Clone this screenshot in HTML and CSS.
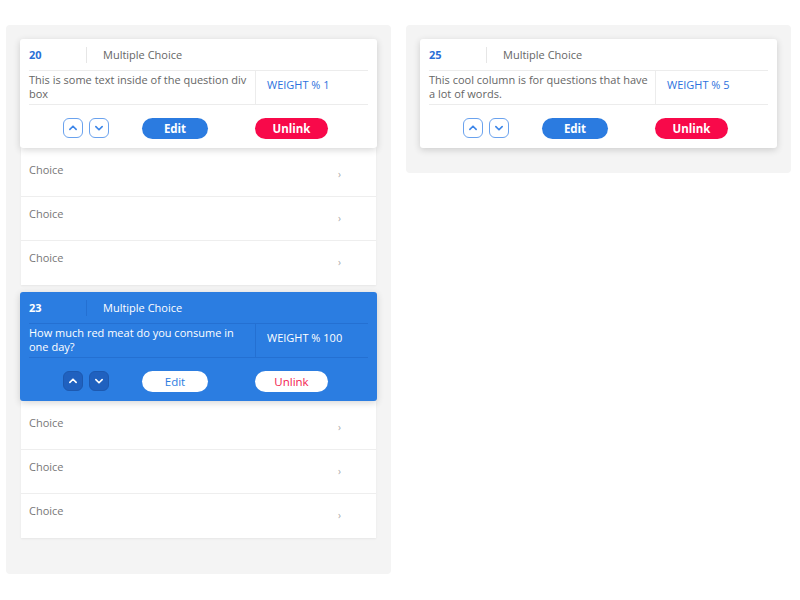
FILE: index.html
```html
<!DOCTYPE html>
<html lang="en">
<head>
    <meta charset="UTF-8">
    <title>Questions</title>
    <link rel="stylesheet" href="styles.css">
</head>
<body>
    <div class="board">
        <div class="column">
            <div class="question">
                <div class="q-head">
                    <div class="q-num">20</div>
                    <div class="q-type">Multiple Choice</div>
                </div>
                <div class="q-body">
                    <div class="q-text">This is some text inside of the question div box</div>
                    <div class="q-weight">WEIGHT % 1</div>
                </div>
                <div class="q-actions">
                    <div class="arrows">
                        <span class="arrow"><svg viewBox="0 0 20 20"><polyline points="6.5,11.5 10,8 13.5,11.5"/></svg></span>
                        <span class="arrow"><svg viewBox="0 0 20 20"><polyline points="6.5,8.5 10,12 13.5,8.5"/></svg></span>
                    </div>
                    <div><span class="btn btn-edit">Edit</span></div>
                    <div><span class="btn btn-unlink">Unlink</span></div>
                </div>
            </div>
            <div class="choices">
                <div class="choice"><span>Choice</span><span class="chev">›</span></div>
                <div class="choice"><span>Choice</span><span class="chev">›</span></div>
                <div class="choice"><span>Choice</span><span class="chev">›</span></div>
            </div>

            <div class="question active">
                <div class="q-head">
                    <div class="q-num">23</div>
                    <div class="q-type">Multiple Choice</div>
                </div>
                <div class="q-body">
                    <div class="q-text">How much red meat do you consume in one day?</div>
                    <div class="q-weight">WEIGHT % 100</div>
                </div>
                <div class="q-actions">
                    <div class="arrows">
                        <span class="arrow"><svg viewBox="0 0 20 20"><polyline points="6.5,11.5 10,8 13.5,11.5"/></svg></span>
                        <span class="arrow"><svg viewBox="0 0 20 20"><polyline points="6.5,8.5 10,12 13.5,8.5"/></svg></span>
                    </div>
                    <div><span class="btn btn-edit">Edit</span></div>
                    <div><span class="btn btn-unlink">Unlink</span></div>
                </div>
            </div>
            <div class="choices">
                <div class="choice"><span>Choice</span><span class="chev">›</span></div>
                <div class="choice"><span>Choice</span><span class="chev">›</span></div>
                <div class="choice"><span>Choice</span><span class="chev">›</span></div>
            </div>
        </div>

        <div class="column short">
            <div class="question">
                <div class="q-head">
                    <div class="q-num">25</div>
                    <div class="q-type">Multiple Choice</div>
                </div>
                <div class="q-body">
                    <div class="q-text">This cool column is for questions that have a lot of words.</div>
                    <div class="q-weight">WEIGHT % 5</div>
                </div>
                <div class="q-actions">
                    <div class="arrows">
                        <span class="arrow"><svg viewBox="0 0 20 20"><polyline points="6.5,11.5 10,8 13.5,11.5"/></svg></span>
                        <span class="arrow"><svg viewBox="0 0 20 20"><polyline points="6.5,8.5 10,12 13.5,8.5"/></svg></span>
                    </div>
                    <div><span class="btn btn-edit">Edit</span></div>
                    <div><span class="btn btn-unlink">Unlink</span></div>
                </div>
            </div>
        </div>
    </div>
</body>
</html>
```

FILE: styles.css
```css
body{
    margin: 0;
    background: #fff;
    font-family: "Open Sans", "Noto Sans", sans-serif;
    font-size: 11px;
    color: #666;
}
.board{
    display: flex;
    align-items: flex-start;
    gap: 15px;
    padding: 25px 6px;
}
.column{
    width: 385px;
    background: #f4f4f4;
    border-radius: 4px;
    padding: 14px 14px 36px;
    box-sizing: border-box;
}
.column.short{
    padding-bottom: 25px;
}
.question{
    background: #fff;
    border-radius: 3px;
    box-shadow: 0 2px 7px rgba(0,0,0,0.16);
    padding: 0 9px;
    position: relative;
    z-index: 1;
}
.q-head{
    display: flex;
    align-items: center;
    height: 31px;
    border-bottom: 1px solid #ececec;
}
.q-num{
    width: 57px;
    font-weight: 700;
    color: #2a6fd6;
    border-right: 1px solid #e6e6e6;
    line-height: 16px;
}
.q-type{
    padding-left: 16px;
    color: #666;
}
.q-body{
    display: grid;
    grid-template-columns: 2fr 1fr;
    border-bottom: 1px solid #ececec;
    height: 33px;
}
.q-text{
    line-height: 14px;
    padding-top: 2px;
    padding-right: 2px;
}
.q-weight{
    border-left: 1px solid #ececec;
    padding-left: 11px;
    line-height: 28px;
    color: #2d72de;
}
.q-actions{
    display: grid;
    grid-template-columns: 1fr 1fr 1fr;
    align-items: center;
    height: 40px;
    padding-top: 3px;
}
.arrows{
    display: flex;
    justify-content: center;
    gap: 6px;
}
.arrow{
    width: 18px;
    height: 18px;
    border: 1px solid #6aa2ee;
    border-radius: 6px;
    display: block;
}
.arrow svg{
    width: 18px;
    height: 18px;
    display: block;
    fill: none;
    stroke: #3d86e8;
    stroke-width: 1.8;
    stroke-linecap: round;
    stroke-linejoin: round;
}
.btn{
    display: inline-block;
    height: 21px;
    line-height: 21px;
    border-radius: 11px;
    text-align: center;
    color: #fff;
    font-weight: 700;
    font-size: 11.5px;
}
.btn-edit{
    width: 66px;
    background: #2b7be0;
}
.btn-unlink{
    width: 73px;
    background: #f8094a;
}
.choices{
    margin: 0 1px 7px;
    padding-top: 5px;
    background: #fff;
    box-shadow: 0 1px 2px rgba(0,0,0,0.06);
}
.choices:last-child{
    margin-bottom: 0;
}
.choice{
    height: 44px;
    box-sizing: border-box;
    padding: 10px 0 0 8px;
    border-bottom: 1px solid #eee;
    display: flex;
    line-height: 14px;
    color: #777;
}
.choice:last-child{
    border-bottom: none;
}
.choice .chev{
    margin-left: auto;
    width: 38px;
    padding-top: 4px;
    color: #aaa;
    font-size: 10px;
}

.question.active{
    background: #2b7de1;
    color: #fff;
}
.active .q-head,
.active .q-body{
    border-bottom-color: #2470d2;
}
.active .q-num{
    color: #fff;
    border-right-color: #2470d2;
}
.active .q-type,
.active .q-weight{
    color: #fff;
}
.active .q-weight{
    border-left-color: #2470d2;
}
.active .arrow{
    background: #2061bf;
    border-color: #1d59b0;
}
.active .arrow svg{
    stroke: #fff;
}
.active .btn{
    background: #fff;
    font-weight: 400;
}
.active .btn-edit{
    color: #2b7de1;
}
.active .btn-unlink{
    color: #f2194f;
}
```
